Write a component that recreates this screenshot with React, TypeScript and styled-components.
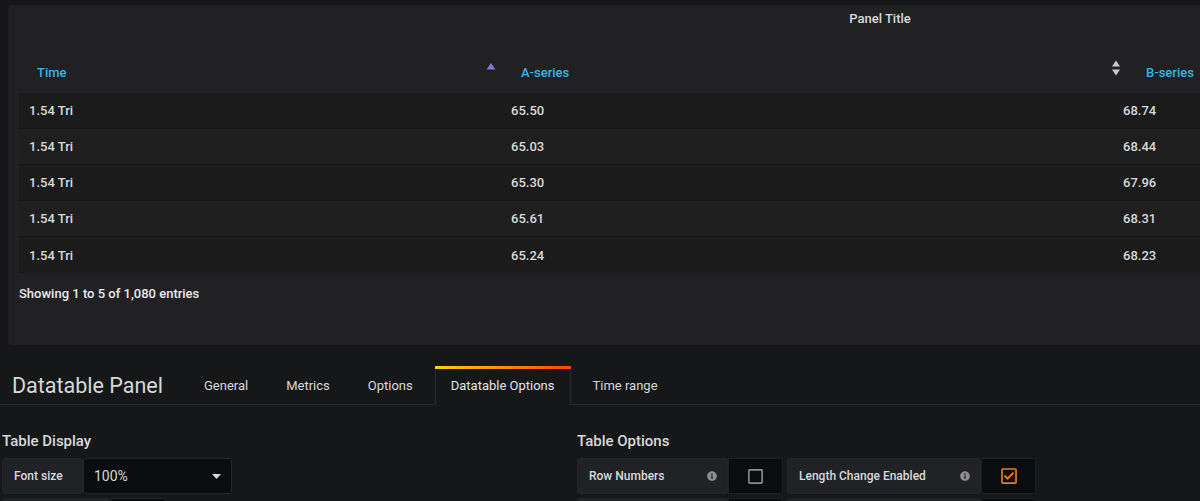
import React from 'react';
import styled, { createGlobalStyle } from 'styled-components';
import { FaInfoCircle, FaRegSquare, FaRegCheckSquare } from 'react-icons/fa';

const GlobalStyle = createGlobalStyle`
  html, body {
    margin: 0;
    padding: 0;
    background: #161719;
    overflow: hidden;
  }
  body {
    font-family: Roboto, 'Liberation Sans', sans-serif;
    color: #d8d9da;
    -webkit-font-smoothing: antialiased;
  }
  * {
    box-sizing: border-box;
  }
`;

type Row = { time: string; a: string; b: string };

const rows: Row[] = [
  { time: '1.54 Tri', a: '65.50', b: '68.74' },
  { time: '1.54 Tri', a: '65.03', b: '68.44' },
  { time: '1.54 Tri', a: '65.30', b: '67.96' },
  { time: '1.54 Tri', a: '65.61', b: '68.31' },
  { time: '1.54 Tri', a: '65.24', b: '68.23' },
];

const tabs = ['General', 'Metrics', 'Options', 'Datatable Options', 'Time range'];

const SortAsc: React.FC = () => (
  <svg width="10" height="16" viewBox="0 0 10 16">
    <path d="M5 3 L9.5 9.5 L0.5 9.5 Z" fill="#7b7bd1" />
  </svg>
);

const SortBoth: React.FC = () => (
  <svg width="10" height="16" viewBox="0 0 10 16">
    <path d="M5 0.5 L9 6.5 L1 6.5 Z" fill="#c8c9ca" />
    <path d="M5 15.5 L9 9.5 L1 9.5 Z" fill="#c8c9ca" />
  </svg>
);

const Caret: React.FC = () => (
  <svg width="9" height="5" viewBox="0 0 9 5">
    <path d="M0 0 L9 0 L4.5 5 Z" fill="#d8d9da" />
  </svg>
);

export default function App() {
  return (
    <Page>
      <GlobalStyle />
      <PanelArea>
        <Panel>
          <PanelTitle>Panel Title</PanelTitle>
          <HeadRow>
            <HeadCell>
              <span>Time</span>
              <SortAsc />
            </HeadCell>
            <HeadCell>
              <span>A-series</span>
              <SortBoth />
            </HeadCell>
            <HeadCell>
              <span>B-series</span>
              <SortBoth />
            </HeadCell>
          </HeadRow>
          <Body>
            {rows.map((r, i) => (
              <DataRow key={i} odd={i % 2 === 0}>
                <Cell>{r.time}</Cell>
                <Cell>{r.a}</Cell>
                <Cell>{r.b}</Cell>
              </DataRow>
            ))}
          </Body>
          <Info>Showing 1 to 5 of 1,080 entries</Info>
        </Panel>
      </PanelArea>

      <EditorHeader>
        <EditorTitle>Datatable Panel</EditorTitle>
        <Tabs>
          {tabs.map((t) => (
            <Tab key={t} active={t === 'Datatable Options'}>
              {t}
            </Tab>
          ))}
        </Tabs>
      </EditorHeader>

      <EditorBody>
        <Section>
          <SectionTitle>Table Display</SectionTitle>
          <FormRow>
            <Label width={81}>Font size</Label>
            <Select width={149}>
              <span>100%</span>
              <Caret />
            </Select>
          </FormRow>
          <FormRow>
            <Label width={108} />
            <Input width={56} />
          </FormRow>
        </Section>
        <Section>
          <SectionTitle>Table Options</SectionTitle>
          <FormRow>
            <Label width={151}>
              Row Numbers
              <FaInfoCircle size={10} color="#8e8e8e" />
            </Label>
            <CheckCell>
              <FaRegSquare size={17} color="#8a8e94" />
            </CheckCell>
            <Label width={194}>
              Length Change Enabled
              <FaInfoCircle size={10} color="#8e8e8e" />
            </Label>
            <CheckCell>
              <FaRegCheckSquare size={18} color="#eb7b18" />
            </CheckCell>
          </FormRow>
          <FormRow>
            <Label width={151} />
            <CheckCell />
            <Label width={194} />
            <CheckCell />
          </FormRow>
        </Section>
      </EditorBody>
    </Page>
  );
}

const Page = styled.div`
  width: 1760px;
  min-height: 501px;
  background: #161719;
`;

const PanelArea = styled.div`
  padding: 5px 0 0 8px;
`;

const Panel = styled.div`
  width: 1744px;
  height: 340px;
  padding: 0 10px;
  background: #212124;
  border: 1px solid #1d1e20;
  border-radius: 3px;
`;

const PanelTitle = styled.div`
  height: 25px;
  line-height: 25px;
  text-align: center;
  font-size: 13px;
  font-weight: 500;
  color: #d8d9da;
`;

const HeadRow = styled.div`
  display: grid;
  grid-template-columns: 484px 625px 1fr;
  height: 62px;
`;

const HeadCell = styled.div`
  display: flex;
  align-items: flex-end;
  justify-content: space-between;
  padding: 0 7px 12px 18px;
  font-size: 13px;
  font-weight: 500;
  color: #33b5e5;
  line-height: 16px;

  > svg {
    margin-bottom: 5px;
  }
`;

const Body = styled.div`
  display: flex;
  flex-direction: column;
`;

const DataRow = styled.div<{ odd: boolean }>`
  display: grid;
  grid-template-columns: 482px 612px 1fr;
  height: 36px;
  align-items: center;
  background: ${(p) => (p.odd ? '#1c1b1c' : '#1f1f20')};
  border-bottom: 1px solid #161616;

  &:last-child {
    border-bottom: none;
  }
`;

const Cell = styled.div`
  padding-left: 10px;
  font-size: 13px;
  font-weight: 500;
  color: #d8d9da;
`;

const Info = styled.div`
  margin-top: 13px;
  font-size: 13px;
  font-weight: 500;
  line-height: 16px;
  color: #e9e9ea;
`;

const EditorHeader = styled.div`
  display: flex;
  align-items: stretch;
  height: 39px;
  margin-top: 21px;
  border-bottom: 1px solid #2b2b2e;
`;

const EditorTitle = styled.div`
  display: flex;
  align-items: center;
  padding-left: 12px;
  margin-right: 25px;
  font-size: 21.5px;
  color: #d8d9da;
`;

const Tabs = styled.div`
  display: flex;
  align-items: stretch;
`;

const Tab = styled.div<{ active: boolean }>`
  position: relative;
  display: flex;
  align-items: center;
  padding: 0 15px;
  margin-right: 6px;
  margin-bottom: -1px;
  font-size: 13px;
  color: ${(p) => (p.active ? '#e3e4e5' : '#d8d9da')};
  background: ${(p) => (p.active ? '#161719' : 'transparent')};
  border: 1px solid ${(p) => (p.active ? '#2b2b2e' : 'transparent')};
  border-top: none;
  border-bottom-color: ${(p) => (p.active ? '#161719' : 'transparent')};

  &::before {
    content: '';
    display: ${(p) => (p.active ? 'block' : 'none')};
    position: absolute;
    top: 0;
    left: -1px;
    right: -1px;
    height: 3px;
    background: linear-gradient(to right, #ffd500 0%, #ff4400 100%);
  }
`;

const EditorBody = styled.div`
  display: grid;
  grid-template-columns: 575px 1fr;
  padding-left: 2px;
`;

const Section = styled.div`
  display: flex;
  flex-direction: column;
  gap: 4px;
`;

const SectionTitle = styled.div`
  margin: 27px 0 4px;
  font-size: 15px;
  font-weight: 500;
  line-height: 18px;
  color: #d8d9da;
`;

const FormRow = styled.div`
  display: flex;
  gap: 4px;
  height: 36px;
`;

const Label = styled.div<{ width: number }>`
  display: flex;
  align-items: center;
  justify-content: space-between;
  width: ${(p) => p.width}px;
  margin-right: -4px;
  padding: 0 10px 0 11px;
  font-size: 12px;
  font-weight: 500;
  color: #d8d9da;
  background: #202226;
  border: 1px solid #232428;
  border-radius: 3px;
`;

const Select = styled.div<{ width: number }>`
  display: flex;
  align-items: center;
  justify-content: space-between;
  width: ${(p) => p.width}px;
  padding: 0 10px;
  font-size: 14px;
  color: #d8d9da;
  background: #0b0c0e;
  border: 1px solid #262628;
  border-radius: 3px;
`;

const Input = styled.div<{ width: number }>`
  width: ${(p) => p.width}px;
  background: #0b0c0e;
  border: 1px solid #262628;
  border-radius: 3px;
`;

const CheckCell = styled.div`
  display: flex;
  align-items: center;
  justify-content: center;
  width: 55px;
  background: #0b0c0e;
  border: 1px solid #1e1f22;
  border-radius: 0 3px 3px 0;
`;
